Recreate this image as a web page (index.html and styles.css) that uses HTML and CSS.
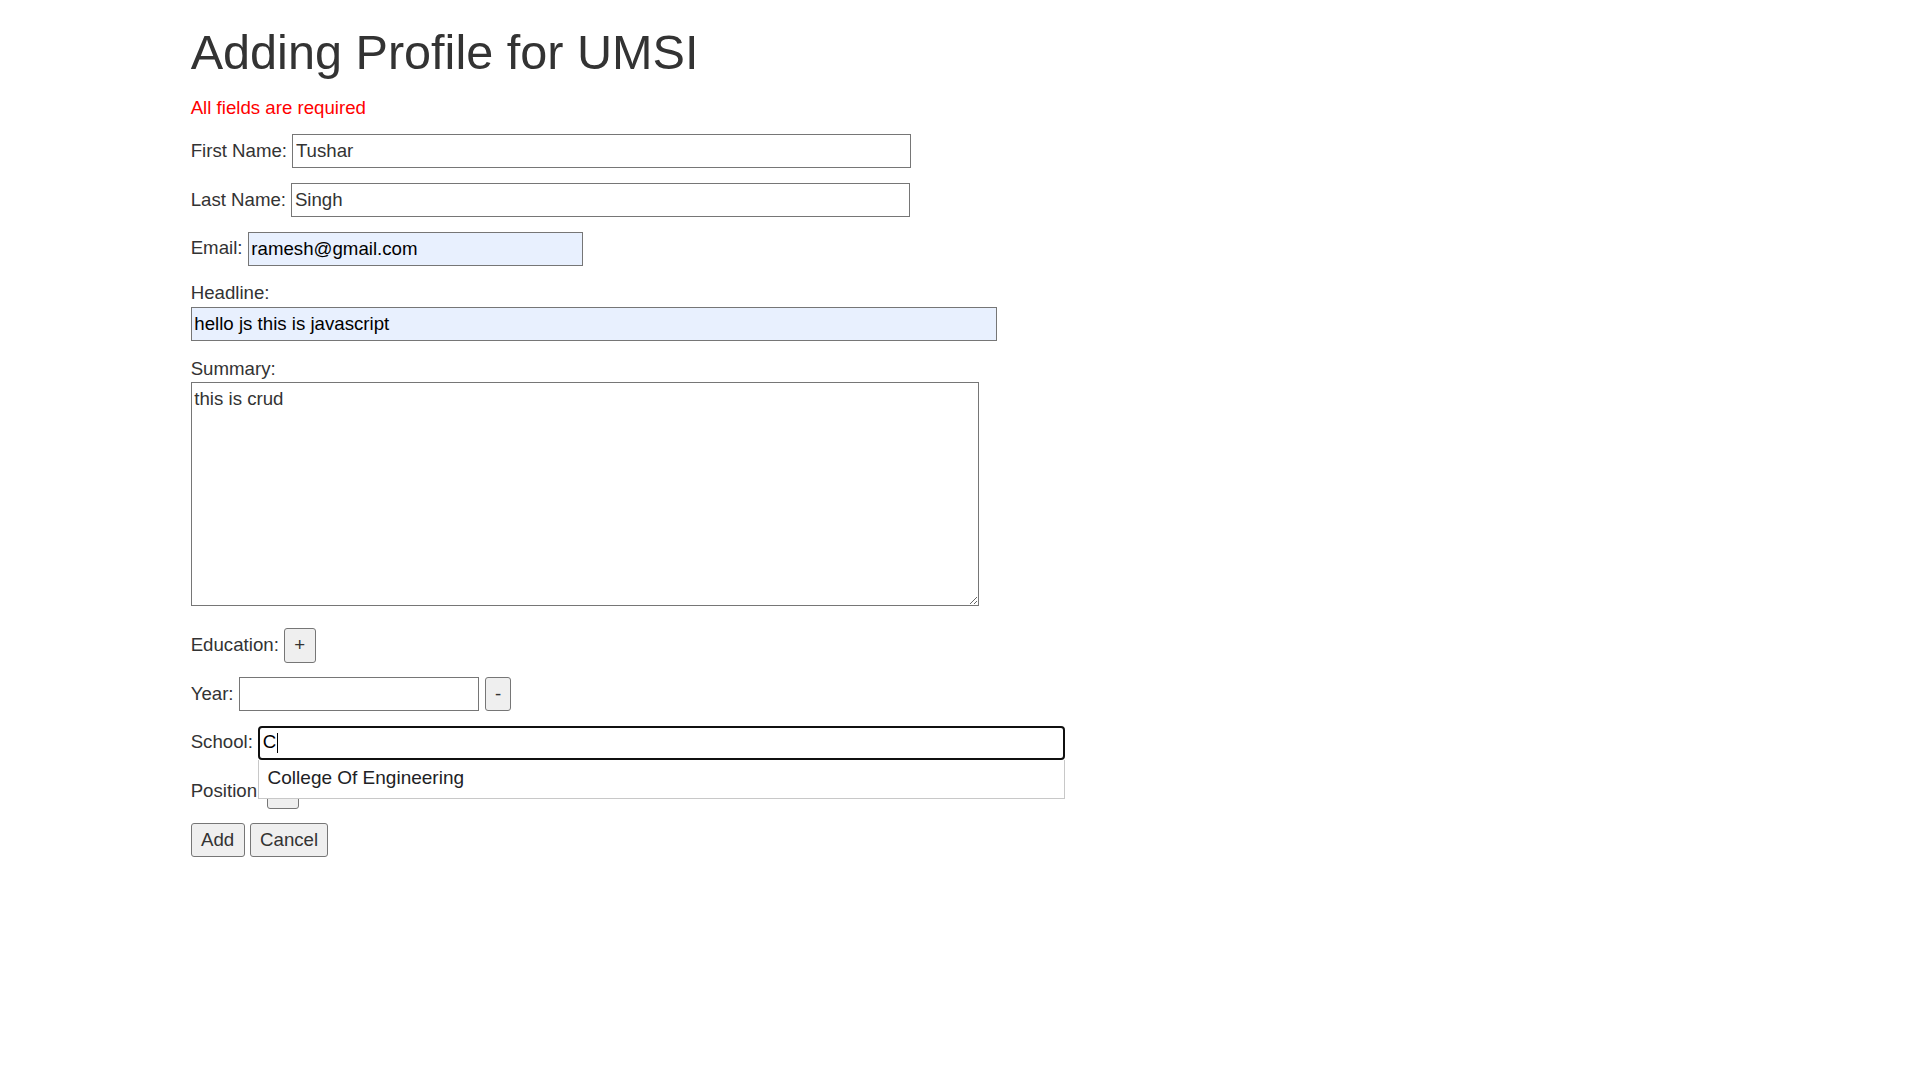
FILE: index.html
```html
<!DOCTYPE html>
<html lang="en">
<head>
<meta charset="utf-8">
<title>Adding Profile for UMSI</title>
<link rel="stylesheet" href="styles.css">
</head>
<body>
<div class="page">
  <h1 class="title">Adding Profile for UMSI</h1>
  <p class="error">All fields are required</p>
  <form class="form">
    <div class="row">
      <label class="lbl">First Name:</label>
      <input class="field w-name" type="text" value="Tushar">
    </div>
    <div class="row">
      <label class="lbl">Last Name:</label>
      <input class="field w-name" type="text" value="Singh">
    </div>
    <div class="row">
      <label class="lbl">Email:</label>
      <input class="field w-email autofill" type="text" value="ramesh@gmail.com">
    </div>
    <div class="stack">
      <label class="lbl">Headline:</label>
      <input class="field w-wide autofill" type="text" value="hello js this is javascript">
    </div>
    <div class="stack stack-summary">
      <label class="lbl">Summary:</label>
      <textarea class="summary">this is crud</textarea>
    </div>
    <div class="row">
      <label class="lbl">Education:</label>
      <button class="btn" type="button">+</button>
    </div>
    <div class="row">
      <label class="lbl">Year:</label>
      <input class="field w-year" type="text" value="">
      <button class="btn" type="button">-</button>
    </div>
    <div class="row">
      <label class="lbl">School:</label>
      <div class="combo">
        <div class="field w-wide focused">C<span class="caret"></span></div>
        <div class="suggest"><span class="suggest-item">College Of Engineering</span></div>
      </div>
    </div>
    <div class="row">
      <label class="lbl">Position:</label>
      <button class="btn" type="button">+</button>
    </div>
    <div class="row">
      <button class="btn" type="button">Add</button>
      <button class="btn" type="button">Cancel</button>
    </div>
  </form>
</div>
</body>
</html>
```
FILE: styles.css
```css
html, body {
  margin: 0;
  padding: 0;
  background: #ffffff;
}

body {
  font-family: "Liberation Sans", Arial, Helvetica, sans-serif;
  font-size: 18.67px;
  line-height: 26.67px;
  color: #333333;
}

.page {
  padding-left: 190.67px;
}

.title {
  margin: 26px 0 0 0;
  font-size: 48.6px;
  line-height: 52.8px;
  font-weight: 400;
  color: #333333;
}

.error {
  margin: 16px 0 12.8px 0;
  color: #ff0000;
  line-height: 26.67px;
}

.form {
  margin: 0;
}

.row {
  display: flex;
  align-items: center;
  gap: 5.2px;
  height: 34px;
  margin-bottom: 14.67px;
}

.stack {
  display: flex;
  flex-direction: column;
  align-items: flex-start;
  margin-bottom: 14.67px;
}

.stack-summary {
  margin-bottom: 22.5px;
}

.lbl {
  display: block;
  line-height: 26.67px;
  white-space: nowrap;
}

.field {
  box-sizing: border-box;
  height: 34px;
  margin: 0;
  padding: 2.4px 2.67px;
  border: 1.33px solid #767676;
  border-radius: 0;
  background: #ffffff;
  font-family: "Liberation Sans", Arial, Helvetica, sans-serif;
  font-size: 18.67px;
  line-height: 26.67px;
  color: #333333;
  outline: none;
}

.w-name { width: 618.67px; }
.w-email { width: 335px; }
.w-wide { width: 806.67px; }
.w-year { width: 240.67px; }

.autofill {
  background: #e8f0fe;
  color: #000000;
}

.summary {
  box-sizing: border-box;
  display: block;
  width: 788px;
  height: 223.5px;
  margin: 0;
  padding: 2.67px;
  border: 1.33px solid #767676;
  font-family: "Liberation Sans", Arial, Helvetica, sans-serif;
  font-size: 18.67px;
  line-height: 26.67px;
  color: #333333;
  background: #ffffff;
  outline: none;
}

.btn {
  box-sizing: border-box;
  height: 34.67px;
  margin: 0;
  padding: 2.67px 9.33px;
  border: 1.33px solid #767676;
  border-radius: 3px;
  background: #efefef;
  font-family: "Liberation Sans", Arial, Helvetica, sans-serif;
  font-size: 18.67px;
  line-height: 26.67px;
  color: #333333;
}

.combo {
  position: relative;
}

.focused {
  display: flex;
  align-items: center;
  border: 2.67px solid #101010;
  border-radius: 4px;
  padding-left: 2.67px;
  color: #000000;
}

.caret {
  display: inline-block;
  width: 1.5px;
  height: 20px;
  margin-left: 0.5px;
  background: #000000;
}

.suggest {
  position: absolute;
  top: 100%;
  left: 0;
  z-index: 5;
  box-sizing: border-box;
  width: 806.67px;
  height: 39px;
  display: flex;
  align-items: center;
  padding-left: 8.5px;
  background: #ffffff;
  border: 1.33px solid #c8c8c8;
  border-top: none;
}

.suggest-item {
  font-size: 19px;
  line-height: 26.67px;
  color: #202124;
}
```
